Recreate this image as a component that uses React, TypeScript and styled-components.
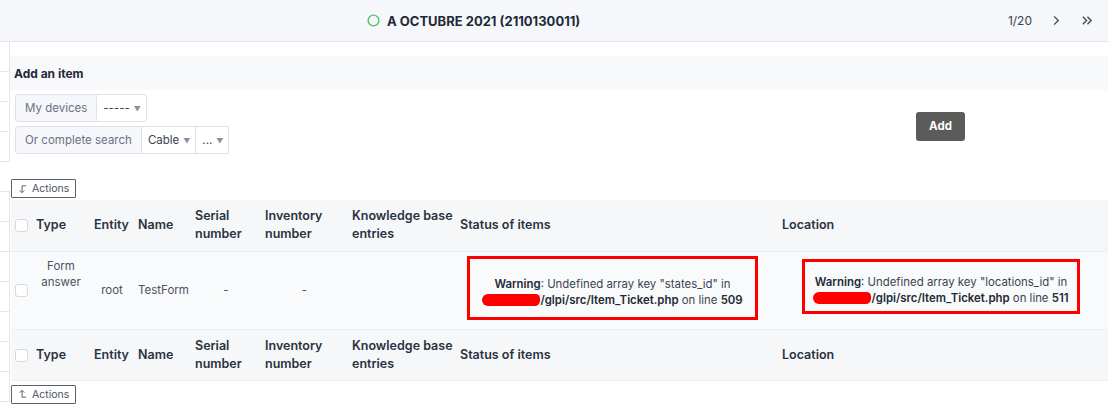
import React from 'react';
import styled, { createGlobalStyle } from 'styled-components';

const GlobalStyle = createGlobalStyle`
  body {
    margin: 0;
    background: #ffffff;
    font-family: Inter, "Noto Sans", "Liberation Sans", sans-serif;
    color: #232e3c;
  }
`;

const Page = styled.div`
  width: 1108px;
  height: 410px;
  overflow: hidden;
  background: #fff;
`;

const TopBar = styled.div`
  height: 41px;
  display: flex;
  align-items: center;
  background: #f5f7fb;
  border-bottom: 1px solid #e3e6ea;
  padding-left: 367px;
  padding-right: 6px;
`;

const Title = styled.div`
  display: flex;
  align-items: center;
  gap: 7px;
  font-size: 13px;
  font-weight: 700;
  color: #1f2937;
`;

const Pager = styled.div`
  margin-left: auto;
  display: flex;
  align-items: center;
  font-size: 12px;
  color: #3a4150;
`;

const PagerCount = styled.span`
  margin-right: 8px;
`;

const PagerButton = styled.span`
  display: inline-flex;
  align-items: center;
  justify-content: center;
  width: 31px;
  color: #434c5a;
`;

const Body = styled.div`
  display: flex;
`;

const Sidebar = styled.div`
  width: 10px;
  flex-shrink: 0;
  display: flex;
  flex-direction: column;
`;

const SideGroup = styled.div<{ $gap?: number }>`
  margin-top: ${({ $gap }) => $gap || 0}px;
  border-right: 1px solid #e3e6ea;
  border-top: ${({ $gap }) => ($gap ? '1px solid #e3e6ea' : 'none')};
`;

const SideItem = styled.div`
  height: 29px;
  border-bottom: 1px solid #e3e6ea;
`;

const Main = styled.div`
  flex: 1;
  padding: 14px 5px 0 0;
`;

const SectionHead = styled.div`
  height: 34px;
  display: flex;
  align-items: center;
  padding-left: 4px;
  background: #f8f9fb;
  font-size: 12px;
  font-weight: 700;
  color: #1f2937;
`;

const AddForm = styled.div`
  display: grid;
  grid-template-columns: 901px auto;
  align-items: center;
  padding: 4px 0 0 5px;
`;

const Fields = styled.div`
  display: flex;
  flex-direction: column;
  gap: 4px;
`;

const InputGroup = styled.div`
  display: flex;
  height: 28px;
`;

const GroupLabel = styled.div`
  display: flex;
  align-items: center;
  padding: 0 9px;
  background: #f5f7fb;
  border: 1px solid #dfe3e8;
  border-radius: 3px 0 0 3px;
  font-size: 11.5px;
  color: #6b7280;
`;

const GroupSelect = styled.div`
  display: flex;
  align-items: center;
  gap: 4px;
  padding: 0 5px 0 6px;
  border: 1px solid #dfe3e8;
  border-left: none;
  font-size: 11.5px;
  color: #3a4150;
  &:last-child {
    border-radius: 0 3px 3px 0;
  }
`;

const Caret = styled.span`
  font-size: 7px;
  color: #8a9099;
  margin-top: 2px;
`;

const AddButton = styled.button`
  width: 49px;
  height: 29px;
  margin-top: 4px;
  border: none;
  border-radius: 3px;
  background: #5b5b59;
  color: #fff;
  font-family: inherit;
  font-size: 11.5px;
  font-weight: 700;
`;

const ActionsButton = styled.button<{ $top: number }>`
  display: inline-flex;
  align-items: center;
  gap: 5px;
  height: 19px;
  margin: ${({ $top }) => $top}px 0 2px 1px;
  padding: 0 6px;
  background: #fff;
  border: 1px solid #5c6068;
  border-radius: 1px;
  font-family: inherit;
  font-size: 10.5px;
  color: #4b5260;
`;

const Table = styled.table`
  width: 1097px;
  margin-left: 1px;
  border-collapse: collapse;
  table-layout: fixed;
  font-size: 12px;
`;

const HeadRow = styled.tr`
  background: #f6f7f9;
  height: 51px;
  border-bottom: 1px solid #eceef1;
`;

const Th = styled.th<{ $w: number }>`
  box-sizing: border-box;
  width: ${({ $w }) => $w}px;
  padding: 0 4px;
  text-align: left;
  white-space: nowrap;
  font-weight: 600;
  font-size: 12.5px;
  line-height: 18px;
  color: #2a3240;
`;

const DataRow = styled.tr`
  background: #f9fafb;
  height: 78px;
  border-bottom: 1px solid #eceef1;
`;

const Td = styled.td<{ $lift?: number }>`
  padding: 0 4px ${({ $lift }) => $lift || 0}px;
  text-align: center;
  font-size: 11.5px;
  line-height: 16px;
  color: #4b5260;
`;

const WarnCell = styled.td<{ $top: number }>`
  padding: ${({ $top }) => $top}px 0 0;
  vertical-align: top;
  text-align: left;
`;

const Check = styled.span`
  display: inline-block;
  width: 11px;
  height: 11px;
  border: 1px solid #d6dae0;
  border-radius: 3px;
  background: #fff;
  vertical-align: middle;
`;

const WarnBox = styled.div<{ $w: number; $h: number; $ml: number }>`
  box-sizing: border-box;
  width: ${({ $w }) => $w}px;
  height: ${({ $h }) => $h}px;
  margin-left: ${({ $ml }) => $ml}px;
  border: 3px solid #ff0000;
  display: flex;
  align-items: center;
  justify-content: center;
  text-align: center;
  font-size: 11.4px;
  line-height: 16px;
  color: #3c4350;
  padding-top: 8px;
  white-space: nowrap;
`;

const Strong = styled.b`
  font-weight: 600;
  color: #222a36;
`;

const Redact = styled.span`
  display: inline-block;
  width: 58px;
  height: 12px;
  background: #ff0000;
  border-radius: 7px 5px 6px 7px;
  vertical-align: -2px;
`;

const StatusCircle = () => (
  <svg width="13" height="13" viewBox="0 0 14 14">
    <circle cx="7" cy="7" r="5.8" fill="none" stroke="#54c45e" strokeWidth="1.5" />
  </svg>
);

const ChevronRight = () => (
  <svg width="8" height="11" viewBox="0 0 8 12">
    <path d="M2 1.5 6.5 6 2 10.5" fill="none" stroke="currentColor" strokeWidth="1.5" />
  </svg>
);

const ChevronsRight = () => (
  <svg width="12" height="11" viewBox="0 0 12 12">
    <path d="M1.5 2 5.5 6 1.5 10M6.5 2 10.5 6 6.5 10" fill="none" stroke="currentColor" strokeWidth="1.5" />
  </svg>
);

const ArrowTurn = ({ up }: { up?: boolean }) => (
  <svg width="9" height="10" viewBox="0 0 10 11" style={up ? { transform: 'scaleY(-1)' } : undefined}>
    <path d="M9 2H4.5V9.5M2 7l2.5 2.6L7 7" fill="none" stroke="#5c6068" strokeWidth="1.1" />
  </svg>
);

const columns: { label: React.ReactNode; w: number }[] = [
  { label: <Check />, w: 21 },
  { label: 'Type', w: 58 },
  { label: 'Entity', w: 44 },
  { label: 'Name', w: 57 },
  { label: <>Serial<br />number</>, w: 70 },
  { label: <>Inventory<br />number</>, w: 87 },
  { label: <>Knowledge base<br />entries</>, w: 108 },
  { label: 'Status of items', w: 322 },
  { label: 'Location', w: 330 },
];

const Header = () => (
  <HeadRow>
    {columns.map((c, i) => (
      <Th key={i} $w={c.w}>{c.label}</Th>
    ))}
  </HeadRow>
);

export default function App() {
  return (
    <Page>
      <GlobalStyle />
      <TopBar>
        <Title>
          <StatusCircle />
          A OCTUBRE 2021 (2110130011)
        </Title>
        <Pager>
          <PagerCount>1/20</PagerCount>
          <PagerButton><ChevronRight /></PagerButton>
          <PagerButton><ChevronsRight /></PagerButton>
        </Pager>
      </TopBar>
      <Body>
        <Sidebar>
          <SideGroup>
            <SideItem />
            <SideItem />
            <SideItem />
            <SideItem />
          </SideGroup>
          <SideGroup $gap={29}>
            <SideItem />
            <SideItem />
            <SideItem />
            <SideItem />
            <SideItem />
            <SideItem />
            <SideItem />
          </SideGroup>
        </Sidebar>
        <Main>
          <SectionHead>Add an item</SectionHead>
          <AddForm>
            <Fields>
              <InputGroup>
                <GroupLabel>My devices</GroupLabel>
                <GroupSelect>----- <Caret>▼</Caret></GroupSelect>
              </InputGroup>
              <InputGroup>
                <GroupLabel>Or complete search</GroupLabel>
                <GroupSelect>Cable <Caret>▼</Caret></GroupSelect>
                <GroupSelect>... <Caret>▼</Caret></GroupSelect>
              </InputGroup>
            </Fields>
            <div>
              <AddButton>Add</AddButton>
            </div>
          </AddForm>
          <ActionsButton $top={25}><ArrowTurn />Actions</ActionsButton>
          <Table>
            <tbody>
              <Header />
              <DataRow>
                <Td><Check /></Td>
                <Td $lift={32}>Form<br />answer</Td>
                <Td>root</Td>
                <Td>TestForm</Td>
                <Td>-</Td>
                <Td>-</Td>
                <Td />
                <WarnCell $top={4}>
                  <WarnBox $w={291} $h={64} $ml={11}>
                    <div>
                      <Strong>Warning</Strong>: Undefined array key "states_id" in<br />
                      <Redact /><Strong>/glpi/src/Item_Ticket.php</Strong> on line <Strong>509</Strong>
                    </div>
                  </WarnBox>
                </WarnCell>
                <WarnCell $top={7}>
                  <WarnBox $w={278} $h={55} $ml={24}>
                    <div>
                      <Strong>Warning</Strong>: Undefined array key "locations_id" in<br />
                      <Redact /><Strong>/glpi/src/Item_Ticket.php</Strong> on line <Strong>511</Strong>
                    </div>
                  </WarnBox>
                </WarnCell>
              </DataRow>
              <Header />
            </tbody>
          </Table>
          <ActionsButton $top={4}><ArrowTurn up />Actions</ActionsButton>
        </Main>
      </Body>
    </Page>
  );
}
